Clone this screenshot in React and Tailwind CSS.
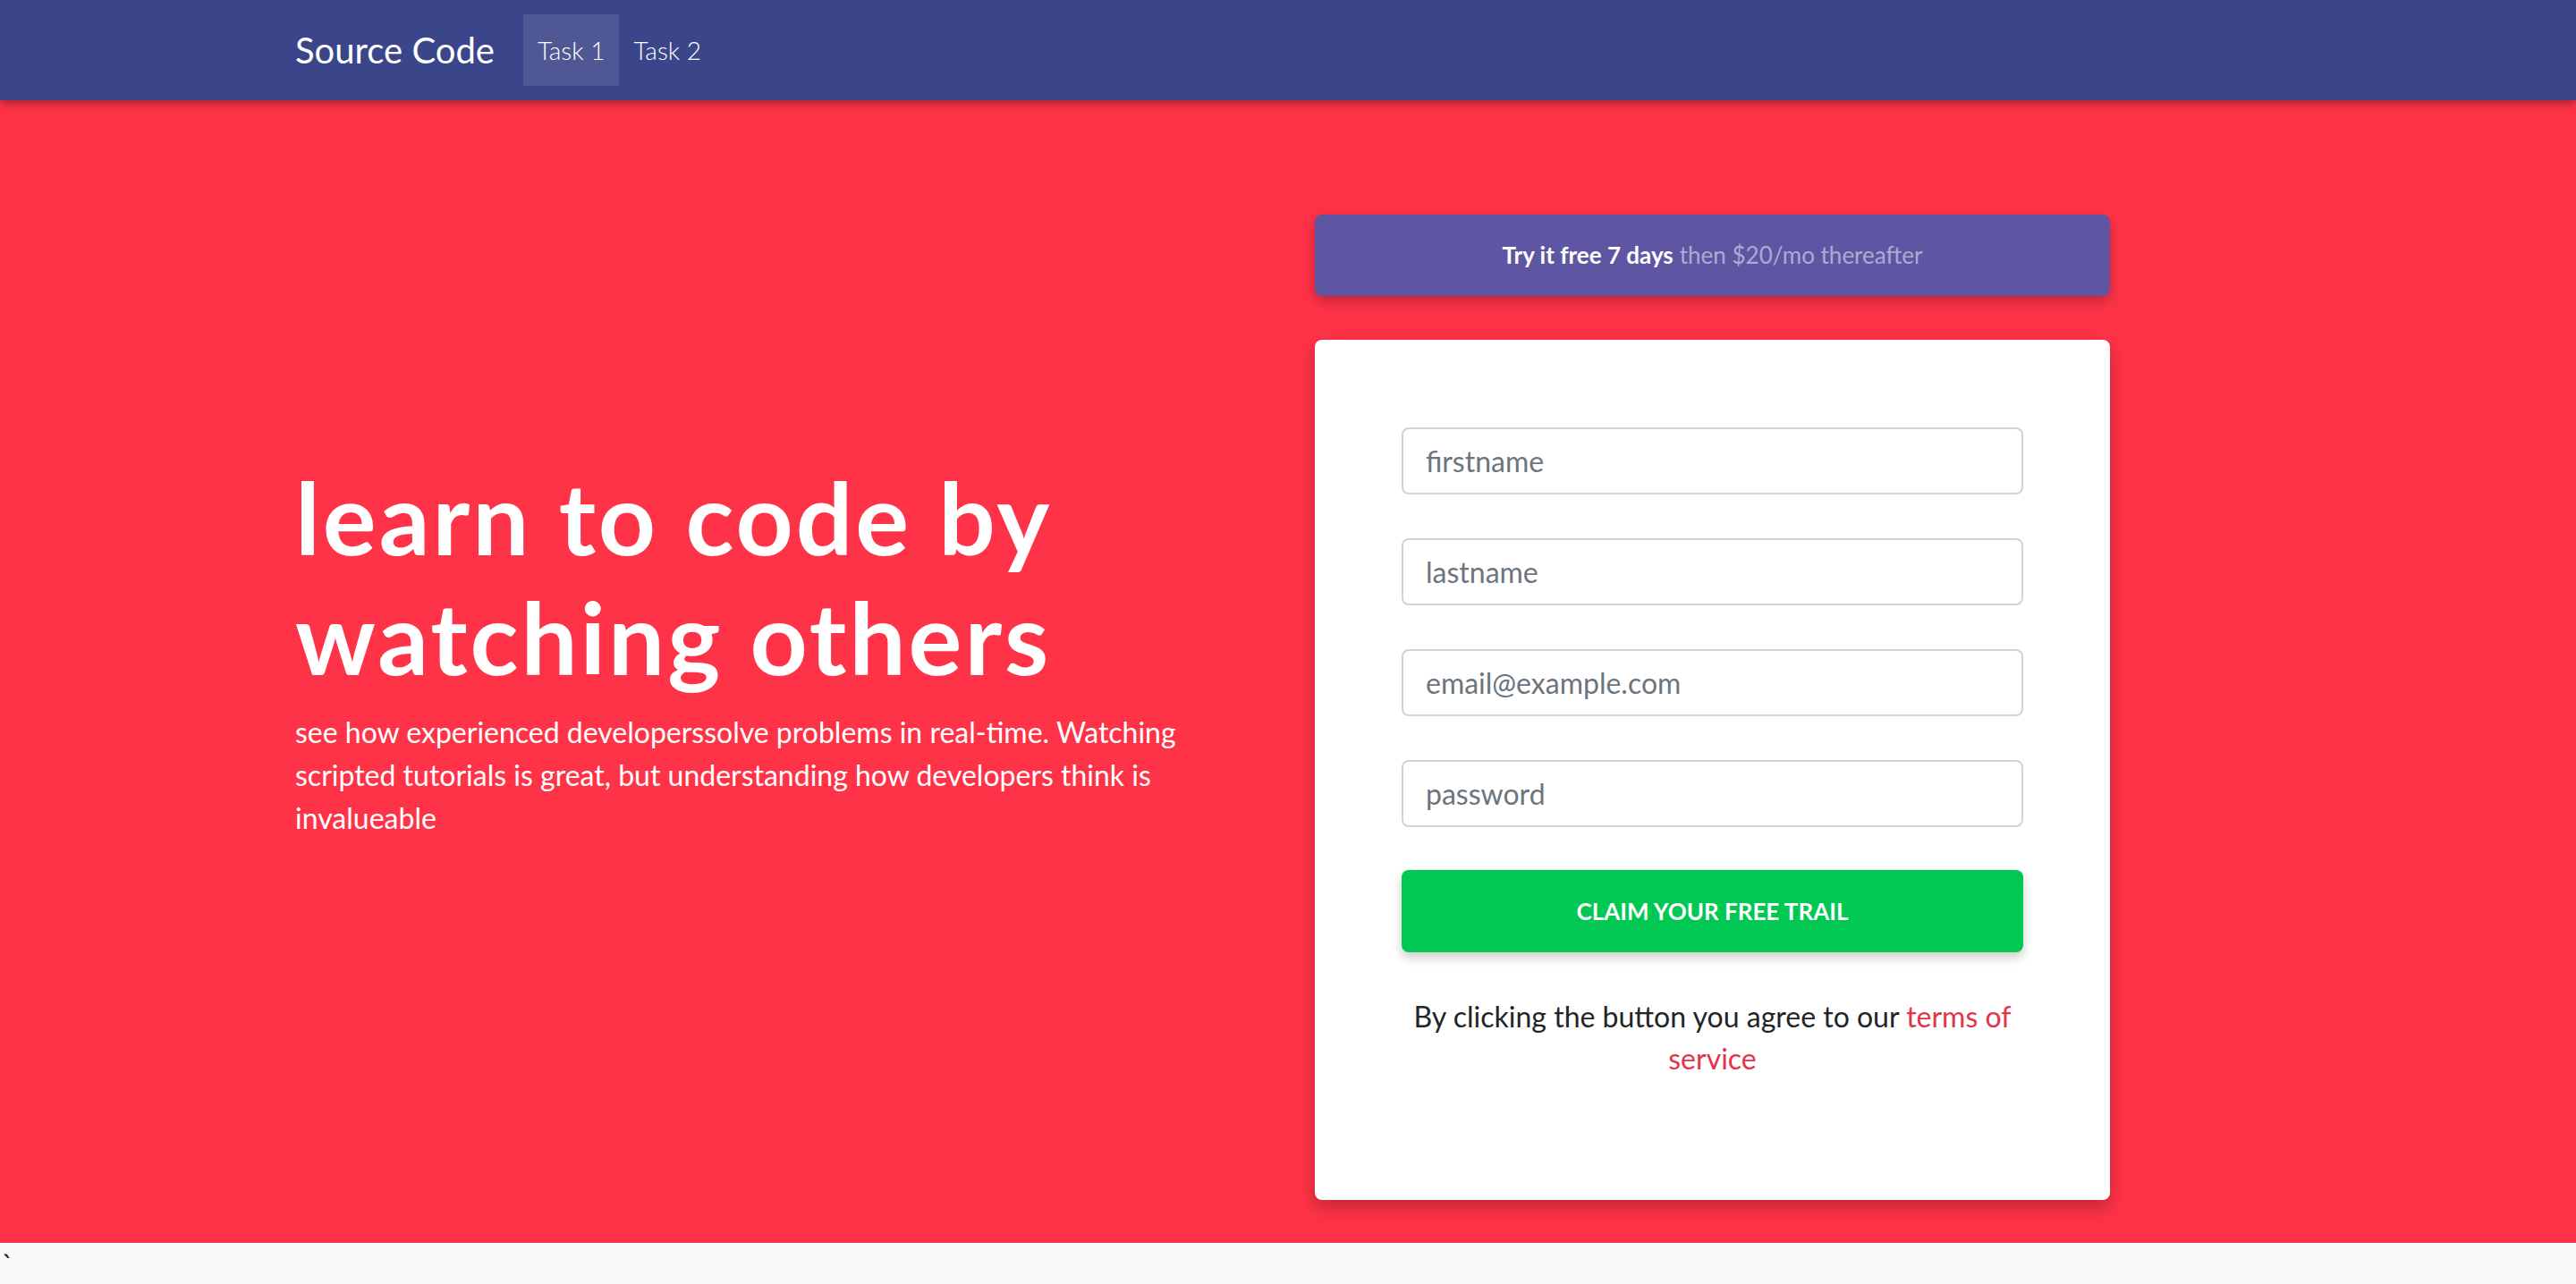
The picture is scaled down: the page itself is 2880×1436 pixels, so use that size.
export default function App() {
  const font = "font-['Segoe_UI','Lato',sans-serif]";
  return (
    <div className={`min-h-screen bg-[#fafafa] text-[#212529] ${font}`}>
      <nav className="relative z-10 h-[112px] bg-[#3b4589] shadow-[0_4px_10px_rgba(0,0,0,0.35)]">
        <div className="mx-auto flex h-full w-[2280px] items-center px-[30px]">
          <a className="mr-[32px] text-[40px] leading-[60px] text-white">Source Code</a>
          <a className="bg-white/10 px-[16px] py-[16px] text-[28px] font-light leading-[48px] text-white">Task 1</a>
          <a className="px-[16px] py-[16px] text-[28px] font-light leading-[48px] text-white">Task 2</a>
        </div>
      </nav>

      <section className="bg-[#ff3347] pb-[48px] pt-[128px]">
        <div className="mx-auto flex w-[2280px] px-[30px]">
          <div className="w-[1080px] pt-[271px] text-white">
            <h1 className="mb-[16px] text-[112px] font-bold leading-[134px] tracking-[3px]">learn to code by watching others</h1>
            <p className="text-[32px] leading-[48px]">
              see how experienced developerssolve problems in real-time. Watching scripted tutorials is great, but
              understanding how developers think is invalueable
            </p>
          </div>

          <div className="ml-[60px] w-[889px]">
            <div className="flex h-[91px] items-center justify-center rounded-[8px] bg-[#5e55a3] text-[26px] shadow-[0_6px_14px_rgba(0,0,0,0.25)]">
              <span className="font-bold text-white">Try it free 7 days</span>
              <span className="ml-[7px] text-white/50">then $20/mo thereafter</span>
            </div>

            <form className="mt-[49px] rounded-[8px] bg-white px-[97px] pb-[135px] pt-[98px] shadow-[0_8px_20px_rgba(0,0,0,0.25)]">
              <div className="flex flex-col gap-[49px]">
                {["firstname", "lastname", "email@example.com", "password"].map((ph) => (
                  <input
                    key={ph}
                    type={ph === "password" ? "password" : "text"}
                    placeholder={ph}
                    className="h-[75px] w-full rounded-[8px] border-2 border-[#ced4da] px-[25px] text-[32px] text-[#495057] outline-none placeholder:text-[#6c757d]"
                  />
                ))}
              </div>
              <button
                type="button"
                className="mt-[48px] h-[92px] w-full rounded-[8px] bg-[#00c853] text-[26px] font-bold uppercase text-white shadow-[0_6px_12px_rgba(0,0,0,0.2)]"
              >
                Claim your free trail
              </button>
              <p className="mt-[48px] text-center text-[32px] leading-[47px] text-[#212529]">
                By clicking the button you agree to our <a className="text-[#e3344a]">terms of service</a>
              </p>
            </form>
          </div>
        </div>
      </section>

      <div className="pl-[2px] text-[32px] leading-[48px]">`</div>
    </div>
  );
}
